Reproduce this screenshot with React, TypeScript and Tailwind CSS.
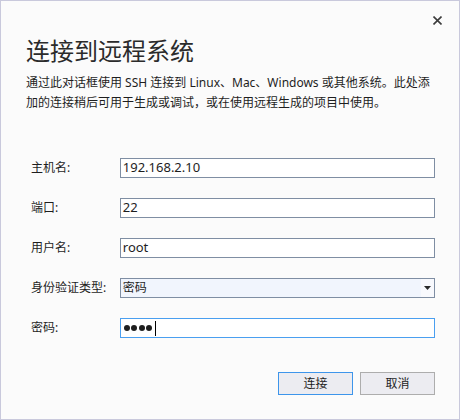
export default function App() {
  const rows = [
    { label: "主机名:", value: "192.168.2.10" },
    { label: "端口:", value: "22" },
    { label: "用户名:", value: "root" },
  ];

  return (
    <div
      className="w-[460px] h-[420px] flex flex-col bg-[#fbfbfb] border border-[#c9c9dc] text-[#1e1e1e]"
      style={{ fontFamily: '"Noto Sans", "Noto Sans CJK SC", sans-serif' }}
    >
      {/* Close */}
      <div className="flex justify-end pt-[15px] pr-[17px] h-[25px]">
        <svg width="9" height="9" viewBox="0 0 9 9" className="text-[#3c3c3c]">
          <path d="M0.5 0.5 L8.5 8.5 M8.5 0.5 L0.5 8.5" stroke="currentColor" strokeWidth="1.6" />
        </svg>
      </div>

      {/* Header */}
      <div className="pl-[25px] pr-[20px] pt-[9px]">
        <h1 className="text-[24px] leading-[32px] font-normal text-[#2b2b2b]">连接到远程系统</h1>
        <p className="mt-[6px] text-[12px] leading-[20px] text-[#1e1e1e]">
          通过此对话框使用 SSH 连接到 Linux、Mac、Windows 或其他系统。此处添加的连接稍后可用于生成或调试，或在使用远程生成的项目中使用。
        </p>
      </div>

      {/* Form */}
      <div className="mt-[45px] pl-[30px] pr-[24px] flex flex-col gap-[20px]">
        {rows.map((r) => (
          <div key={r.label} className="flex items-center h-[20px]">
            <div className="w-[89px] text-[12px]">{r.label}</div>
            <div className="w-[316px] h-[20px] border border-[#7f8ea3] bg-white flex items-center pl-[2px] text-[13px]">
              {r.value}
            </div>
          </div>
        ))}
        <div className="flex items-center h-[20px]">
          <div className="w-[89px] text-[12px]">身份验证类型:</div>
          <div className="w-[316px] h-[20px] border border-[#7f8ea3] bg-[#f1f5fd] flex items-center text-[12px]">
            <span className="flex-1 pl-[2px]">密码</span>
            <div className="w-[13px] h-full bg-[#f8f9fd] flex items-center justify-center">
              <svg width="7" height="4" viewBox="0 0 7 4">
                <path d="M0 0 L7 0 L3.5 4 Z" fill="#2a2a2a" />
              </svg>
            </div>
          </div>
        </div>
        <div className="flex items-center h-[20px]">
          <div className="w-[89px] text-[12px]">密码:</div>
          <div className="w-[316px] h-[20px] border border-[#4a9ff0] bg-white flex items-center pl-[3px] gap-[1.5px]">
            <span className="w-[6px] h-[6px] rounded-full bg-[#1e1e1e]" />
            <span className="w-[6px] h-[6px] rounded-full bg-[#1e1e1e]" />
            <span className="w-[6px] h-[6px] rounded-full bg-[#1e1e1e]" />
            <span className="w-[6px] h-[6px] rounded-full bg-[#1e1e1e]" />
            <span className="ml-[1px] w-[1px] h-[15px] bg-black" />
          </div>
        </div>
      </div>

      {/* Buttons */}
      <div className="mt-[34px] pr-[24px] flex justify-end gap-[7px]">
        <button className="w-[75px] h-[23px] border border-[#3d95eb] bg-[#ececf1] text-[12px] text-[#1e1e1e]">
          连接
        </button>
        <button className="w-[75px] h-[23px] border border-[#adadad] bg-[#ececf1] text-[12px] text-[#1e1e1e]">
          取消
        </button>
      </div>
    </div>
  );
}
